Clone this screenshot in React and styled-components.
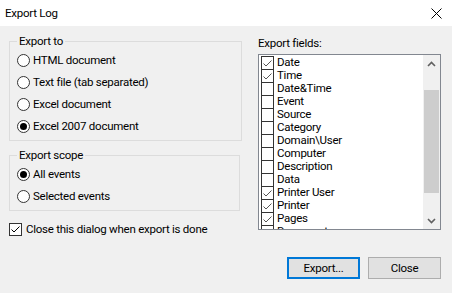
import React from 'react';
import styled, { createGlobalStyle } from 'styled-components';

const GlobalStyle = createGlobalStyle`
  html, body {
    margin: 0;
    padding: 0;
    background: #f0f0f0;
  }
  body {
    font-family: Roboto, "Liberation Sans", sans-serif;
    font-size: 11.5px;
    letter-spacing: -0.25px;
    color: #000;
  }
`;

const Dialog = styled.div`
  width: 452px;
  height: 293px;
  display: flex;
  flex-direction: column;
  background: #f0f0f0;
  overflow: hidden;
`;

const TitleBar = styled.div`
  height: 26px;
  flex: 0 0 26px;
  background: #fff;
  display: flex;
  align-items: center;
  justify-content: space-between;
  padding: 0 10px 0 5px;
  box-sizing: border-box;
`;

const Title = styled.span`
  line-height: 15px;
`;

const Body = styled.div`
  flex: 1;
  display: flex;
  gap: 16px;
  padding: 8px 11px 0 9px;
`;

const LeftColumn = styled.div`
  width: 233px;
  display: flex;
  flex-direction: column;
`;

const RightColumn = styled.div`
  flex: 1;
  display: flex;
  flex-direction: column;
  padding-top: 2px;
`;

const Group = styled.fieldset`
  margin: ${(p) => (p.$first ? '0' : '7px')} ${(p) => p.$inset || 0}px 0 0;
  padding: 0 0 3px 7px;
  border: 1px solid #dcdcdc;
  min-inline-size: 0;
`;

const Legend = styled.legend`
  padding: 0 2px;
  line-height: 15px;
`;

const OptionRow = styled.label`
  height: 22px;
  display: flex;
  align-items: center;
  gap: 3px;
  line-height: 15px;
`;

const RadioCircle = styled.span`
  width: 13px;
  height: 13px;
  box-sizing: border-box;
  border: 1px solid #333;
  border-radius: 50%;
  background: #fff;
  display: flex;
  align-items: center;
  justify-content: center;

  &::after {
    content: '';
    width: 7px;
    height: 7px;
    border-radius: 50%;
    background: ${(p) => (p.$checked ? '#000' : 'transparent')};
  }
`;

const CheckRow = styled.label`
  margin-top: 10px;
  height: 16px;
  display: flex;
  align-items: center;
  gap: 4px;
  line-height: 15px;
`;

const CheckBox = styled.span`
  width: 13px;
  height: 13px;
  box-sizing: border-box;
  border: 1px solid #333;
  background: #fff;
  display: flex;
  align-items: center;
  justify-content: center;
`;

const FieldsLabel = styled.div`
  line-height: 15px;
  margin-bottom: 3px;
`;

const ListBox = styled.div`
  height: 176px;
  box-sizing: border-box;
  border: 1px solid #828790;
  background: #fff;
  display: flex;
  overflow: hidden;
`;

const Items = styled.div`
  flex: 1;
  padding: 1px 0 0 2px;
  overflow: hidden;
`;

const Item = styled.div`
  height: 13px;
  display: flex;
  align-items: flex-start;
  gap: 3px;
  line-height: 13px;
  white-space: nowrap;
`;

const ItemBox = styled.span`
  flex: 0 0 13px;
  width: 13px;
  height: 14px;
  box-sizing: border-box;
  border: 1px solid #333;
  background: #fff;
  display: flex;
  align-items: center;
  justify-content: center;
`;

const ScrollBar = styled.div`
  width: 17px;
  background: #f0f0f0;
  display: flex;
  flex-direction: column;
`;

const ScrollArrow = styled.div`
  height: 17px;
  flex: 0 0 17px;
  display: flex;
  align-items: center;
  justify-content: center;
`;

const ScrollTrack = styled.div`
  flex: 1;
  display: flex;
  flex-direction: column;
`;

const Thumb = styled.div`
  margin: ${(p) => p.$offset}px 1px 0;
  height: ${(p) => p.$size}px;
  background: #cdcdcd;
`;

const ButtonRow = styled.div`
  margin-top: 27px;
  display: flex;
  justify-content: flex-end;
  gap: 8px;
`;

const Button = styled.button`
  width: 73px;
  height: 22px;
  box-sizing: border-box;
  font-family: inherit;
  font-size: 11.5px;
  letter-spacing: -0.25px;
  color: #000;
  background: #e1e1e1;
  border: ${(p) => (p.$default ? '2px solid #0078d7' : '1px solid #adadad')};
  padding: 0;
`;

const CheckMark = ({ color = '#000' }) => (
  <svg width="11" height="11" viewBox="0 0 11 11">
    <path d="M1.5 5.5 L4 8 L9.5 2.5" fill="none" stroke={color} strokeWidth="1" />
  </svg>
);

const Chevron = ({ down }) => (
  <svg width="9" height="6" viewBox="0 0 9 6">
    <path
      d={down ? 'M1 1 L4.5 4.5 L8 1' : 'M1 5 L4.5 1.5 L8 5'}
      fill="none"
      stroke="#606060"
      strokeWidth="1.6"
    />
  </svg>
);

const CloseIcon = () => (
  <svg width="11" height="11" viewBox="0 0 11 11">
    <path d="M0.5 0.5 L10.5 10.5 M10.5 0.5 L0.5 10.5" stroke="#000" strokeWidth="1" />
  </svg>
);

const exportTargets = [
  { label: 'HTML document' },
  { label: 'Text file (tab separated)' },
  { label: 'Excel document' },
  { label: 'Excel 2007 document', checked: true },
];

const scopes = [
  { label: 'All events', checked: true },
  { label: 'Selected events' },
];

// last entry only peeks in at the bottom of the list, as in the original
const fields = [
  { name: 'Date', on: true },
  { name: 'Time', on: true },
  { name: 'Date&Time' },
  { name: 'Event' },
  { name: 'Source' },
  { name: 'Category' },
  { name: 'Domain\\User' },
  { name: 'Computer' },
  { name: 'Description' },
  { name: 'Data' },
  { name: 'Printer User', on: true },
  { name: 'Printer', on: true },
  { name: 'Pages', on: true },
  { name: 'Document name' },
];

const Radio = ({ label, checked }) => (
  <OptionRow>
    <RadioCircle $checked={checked} />
    {label}
  </OptionRow>
);

export default function App() {
  return (
    <>
      <GlobalStyle />
      <Dialog>
        <TitleBar>
          <Title>Export Log</Title>
          <CloseIcon />
        </TitleBar>
        <Body>
          <LeftColumn>
            <Group $first>
              <Legend>Export to</Legend>
              {exportTargets.map((t) => (
                <Radio key={t.label} {...t} />
              ))}
            </Group>
            <Group $inset={2}>
              <Legend>Export scope</Legend>
              {scopes.map((s) => (
                <Radio key={s.label} {...s} />
              ))}
            </Group>
            <CheckRow>
              <CheckBox>
                <CheckMark />
              </CheckBox>
              Close this dialog when export is done
            </CheckRow>
          </LeftColumn>
          <RightColumn>
            <FieldsLabel>Export fields:</FieldsLabel>
            <ListBox>
              <Items>
                {fields.map((f) => (
                  <Item key={f.name}>
                    <ItemBox>{f.on && <CheckMark color="#555" />}</ItemBox>
                    {f.name}
                  </Item>
                ))}
              </Items>
              <ScrollBar>
                <ScrollArrow>
                  <Chevron />
                </ScrollArrow>
                <ScrollTrack>
                  <Thumb $offset={18} $size={103} />
                </ScrollTrack>
                <ScrollArrow>
                  <Chevron down />
                </ScrollArrow>
              </ScrollBar>
            </ListBox>
            <ButtonRow>
              <Button $default>Export...</Button>
              <Button>Close</Button>
            </ButtonRow>
          </RightColumn>
        </Body>
      </Dialog>
    </>
  );
}
